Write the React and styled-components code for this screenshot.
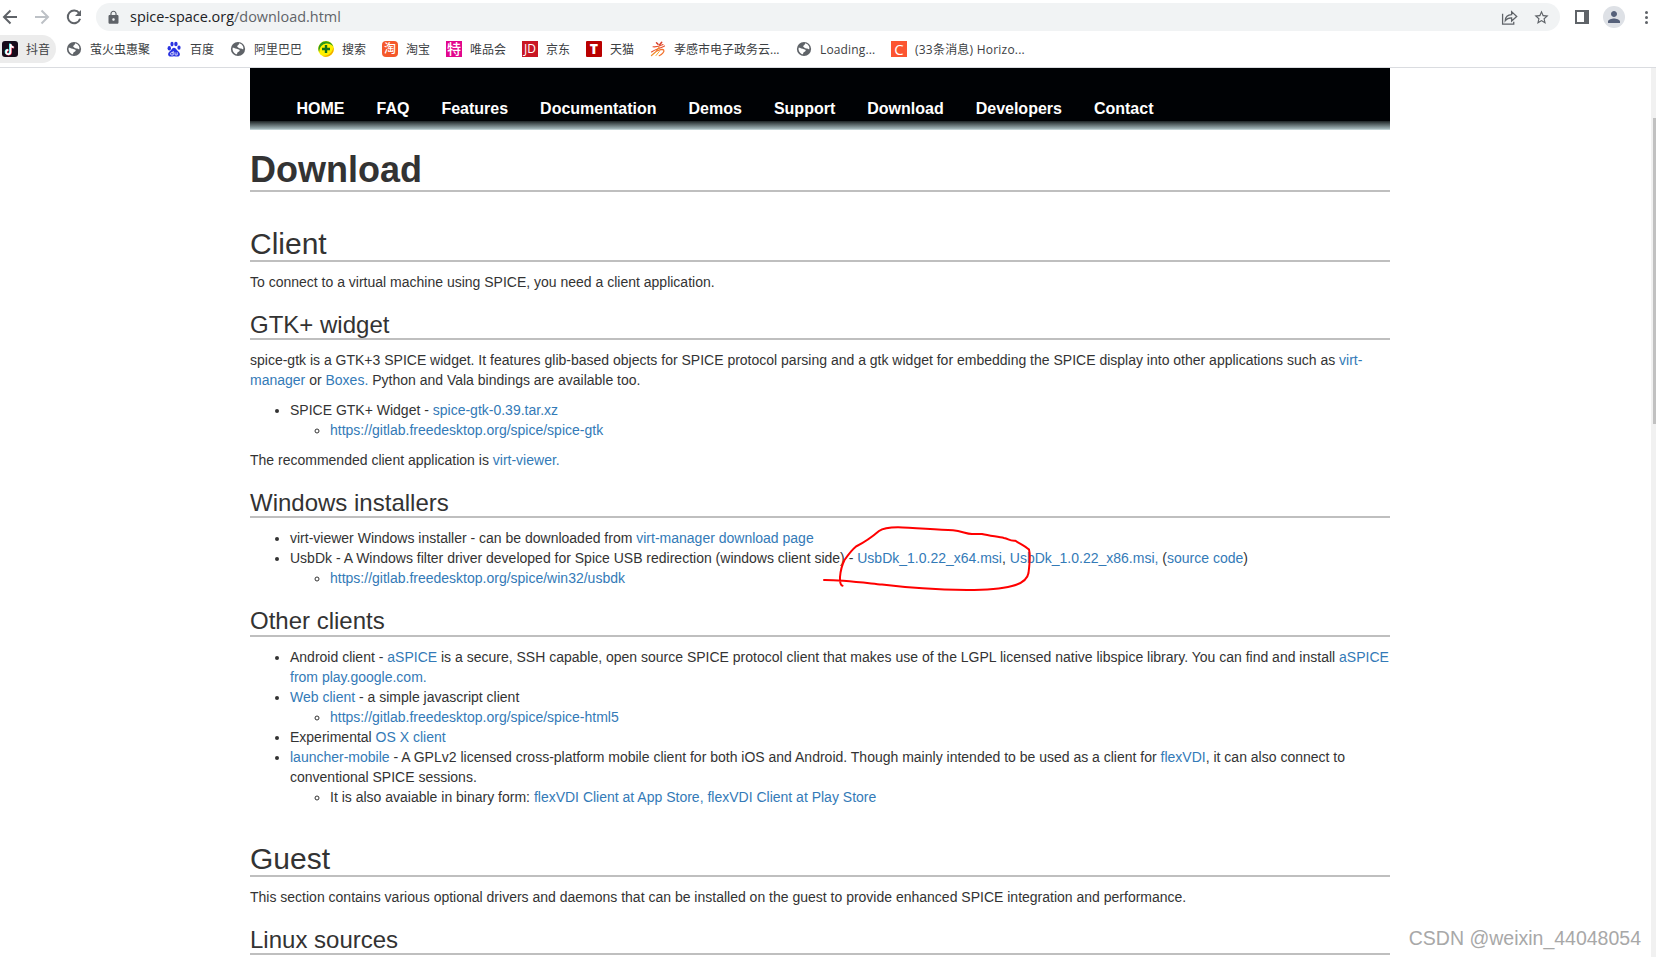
import React from "react";
import styled, { createGlobalStyle } from "styled-components";
import { MdLock, MdPerson, MdStarBorder } from "react-icons/md";

const navItems = [
  "HOME",
  "FAQ",
  "Features",
  "Documentation",
  "Demos",
  "Support",
  "Download",
  "Developers",
  "Contact",
];

const GlobeIcon = () => (
  <svg width="16" height="16" viewBox="0 0 16 16">
    <circle cx="8" cy="8" r="7.1" fill="#5f6368" />
    <path
      d="M2.6 6.8c1.6-.1 2 .7 3.2.8 1.3.1 1.7.9 3 1 1 .2 1.2 1 .5 1.7-.8.8-1.9.7-2.1 1.9-.1.7-.5 1.3-1.2 1C3.500 12 2.1 9.500 2.6 6.800zM9.200 2.300c1.7.4 3 1.5 3.8 3 .4 1 .5 2 .3 3-.8.1-1.2-.9-2.2-.9-1.2 0-2-.3-2.900-1-1-.8-1.400-1.300-.5-2 .9-.7 1.3-1 1.5-2.100z"
      fill="#fff"
    />
  </svg>
);

const DouyinIcon = () => (
  <svg width="16" height="16" viewBox="0 0 16 16">
    <rect width="16" height="16" rx="3" fill="#170b1a" />
    <g fill="none" strokeWidth="1.7">
      <path d="M7.9 2.5v8.2a2.2 2.2 0 1 1-2.2-2.2M7.9 3c.2 1.8 1.3 2.8 3.2 2.9" stroke="#25f4ee" />
      <path d="M9 3.3v8.2a2.2 2.2 0 1 1-2.2-2.2M9 3.8c.2 1.8 1.3 2.8 3.2 2.9" stroke="#fe2c55" />
      <path d="M8.5 2.9v8.2a2.2 2.2 0 1 1-2.2-2.2M8.5 3.4c.2 1.8 1.3 2.8 3.2 2.9" stroke="#fff" />
    </g>
  </svg>
);

const BaiduIcon = () => (
  <svg width="16" height="16" viewBox="0 0 16 16" fill="#2932e1">
    <ellipse cx="3.3" cy="7.3" rx="1.7" ry="2.2" />
    <ellipse cx="6" cy="3.1" rx="1.6" ry="2.3" />
    <ellipse cx="9.9" cy="3" rx="1.7" ry="2.2" />
    <ellipse cx="13" cy="6.7" rx="1.6" ry="2.1" />
    <path d="M8 6.8c1.4 0 2.1 1.4 3 2.400 1.2 1.2 2.9 2 2.9 4 0 1.8-1.3 2.400-2.700 2.300-1.2 0-2-.3-3.200-.3s-2.100.3-3.200.3c-1.6 0-2.700-.7-2.700-2.300 0-1.9 1.8-2.8 2.900-4C5.900 8.200 6.600 6.800 8 6.800z" />
    <path
      d="M7.200 10v4H5.700a1.200 1.200 0 0 1 0-2.400h1.500M9 11.300v1.800c0 .7.3.9.8.9h1.400v-2.700"
      fill="none"
      stroke="#fff"
      strokeWidth=".8"
    />
  </svg>
);

const SearchBallIcon = () => (
  <svg width="16" height="16" viewBox="0 0 16 16">
    <circle cx="8" cy="8" r="7.9" fill="#fff100" />
    <path
      d="M.4 8C.4 3.5 4 0 8.3.2c3.400.1 6 2.400 7 5.200C12.500 2.300 8 1.300 4.600 4 2.700 5.300 1.500 7.200 1.200 11 .7 10.200.4 9 .4 8z"
      fill="#2d9a1c"
    />
    <path
      d="M15.300 6c1 3.200-.2 6.300-2.600 8-2.400 1.900-5.900 2.200-8.400.8 3 .2 5.700-.4 7.700-2.300 1.900-1.700 3-3.800 3.300-6.500z"
      fill="#f2a900"
    />
    <path d="M8 4v8M4 8h8" stroke="#12701c" strokeWidth="2.4" />
  </svg>
);

const RunnerIcon = () => (
  <svg width="16" height="16" viewBox="0 0 16 16" fill="none" strokeLinecap="round">
    <path d="M6.5 1.8L8 3.300M11.700 1.300L9.500 4" stroke="#d9402c" strokeWidth="1.5" />
    <path d="M3 5.8c3 .3 6-.2 10-2.300M14.500 4.900C9.500 7.500 5 8.300 1.500 11" stroke="#e8502c" strokeWidth="1.1" />
    <path d="M9 6.500C7.500 9.500 5 12 1.500 14.500" stroke="#f08b2a" strokeWidth="1.300" />
    <path d="M7 10c2.500-1.300 6-2 6.800-.8.8 1.300-1.500 4-4.600 5.500" stroke="#f2702a" strokeWidth="1.200" />
    <path d="M9.300 10.500L6 14.500" stroke="#f5a32a" strokeWidth="1" />
  </svg>
);

const bookmarks = [
  { label: "抖音", width: 66, icon: <DouyinIcon />, active: true },
  { label: "萤火虫惠聚", width: 100, icon: <GlobeIcon /> },
  { label: "百度", width: 64, icon: <BaiduIcon /> },
  { label: "阿里巴巴", width: 88, icon: <GlobeIcon /> },
  { label: "搜索", width: 64, icon: <SearchBallIcon /> },
  { label: "淘宝", width: 64, glyph: "淘", bg: "#f4582a", size: 12, radius: 4 },
  { label: "唯品会", width: 76, glyph: "特", bg: "#e2068c", size: 14 },
  { label: "京东", width: 64, glyph: "JD", bg: "#c91623", size: 12 },
  { label: "天猫", width: 64, glyph: "T", bg: "#b90000", size: 14, radius: 1, bold: true },
  { label: "孝感市电子政务云...", width: 146, icon: <RunnerIcon /> },
  { label: "Loading...", width: 95, icon: <GlobeIcon />, spacing: 0.15 },
  { label: "(33条消息) Horizo...", width: 150, glyph: "C", bg: "#fc5531", size: 15, spacing: 0.22 },
];

const App = () => {
  return (
    <Screen>
      <GlobalStyle />
      <Toolbar>
        <NavIcon $color="#5f6368" viewBox="0 0 16 16">
          <path d="M15 8H2M8.500 1.500L2 8l6.500 6.500" />
        </NavIcon>
        <NavIcon $color="#bdc1c6" viewBox="0 0 16 16">
          <path d="M1 8h13M7.500 1.500L14 8l-6.500 6.500" />
        </NavIcon>
        <NavIcon $color="#5f6368" viewBox="0 0 16 16">
          <path d="M13.200 4.200A6.300 6.300 0 1 0 14.100 9.800" />
          <path d="M15 1v6H9z" fill="#5f6368" stroke="none" />
        </NavIcon>
        <AddressBar>
          <MdLock className="lock" />
          <Url>
            spice-space.org<span>/download.html</span>
          </Url>
          <ShareIcon viewBox="0 0 16 16">
            <path d="M1.500 4.500v9.800H12V12" />
            <path d="M4 11c.2-3.600 2.400-5.500 6-5.600V2.500L14.800 7 10 11.300V8.400C7.500 8.300 5.500 9 4 11z" />
          </ShareIcon>
          <MdStarBorder className="star" />
        </AddressBar>
        <PanelIcon />
        <Avatar>
          <MdPerson />
        </Avatar>
        <Dots>
          <i />
          <i />
          <i />
        </Dots>
      </Toolbar>

      <BookmarkBar>
        {bookmarks.map((item) => (
          <Bookmark
            key={item.label}
            $width={item.width}
            $active={item.active}
            $spacing={item.spacing}
          >
            {item.icon || (
              <Badge $bg={item.bg} $size={item.size} $radius={item.radius} $bold={item.bold}>
                {item.glyph}
              </Badge>
            )}
            <span>{item.label}</span>
          </Bookmark>
        ))}
      </BookmarkBar>

      <Viewport>
        <Page>
          <Header>
            {navItems.map((item) => (
              <NavLink key={item}>{item}</NavLink>
            ))}
          </Header>

          <Title>Download</Title>

          <Heading>Client</Heading>
          <Text>To connect to a virtual machine using SPICE, you need a client application.</Text>

          <SubHeading>GTK+ widget</SubHeading>
          <Text>
            spice-gtk is a GTK+3 SPICE widget. It features glib-based objects for SPICE protocol
            parsing and a gtk widget for embedding the SPICE display into other applications such
            as <Link>virt-manager</Link> or <Link>Boxes.</Link> Python and Vala bindings are
            available too.
          </Text>
          <List>
            <li>
              SPICE GTK+ Widget - <Link>spice-gtk-0.39.tar.xz</Link>
              <SubList>
                <li>
                  <Link>https://gitlab.freedesktop.org/spice/spice-gtk</Link>
                </li>
              </SubList>
            </li>
          </List>
          <Text>
            The recommended client application is <Link>virt-viewer.</Link>
          </Text>

          <SubHeading>Windows installers</SubHeading>
          <List>
            <li>
              virt-viewer Windows installer - can be downloaded from{" "}
              <Link>virt-manager download page</Link>
            </li>
            <li>
              UsbDk - A Windows filter driver developed for Spice USB redirection (windows client
              side) -{" "}
              <Marked>
                <Link>UsbDk_1.0.22_x64.msi</Link>
                <Scribble viewBox="0 0 210 70">
                  <path d="M20.500 58.700C17.500 58 18 54 18 50C18.500 44 20 38 22.500 33C26 28 31 22 34 19.500C40 16.500 50 10 57 4C61 1 68 .2 76 .2C90 .5 112 2.500 131 3.300C140 4 144 7 150 7H160C168 9 176 9.500 182 11C187 12 187 14 193 13.700C199 17 204 19.500 207 22.500C208.500 28 207.500 38 206.500 46C205.500 52 200 56.500 190 59C176 62.700 160 63 145 63C110 62.500 80 60 60 57.500C40 55.500 18 52.800 2 53" />
                </Scribble>
              </Marked>
              , <Link>UsbDk_1.0.22_x86.msi,</Link> (<Link>source code</Link>)
              <SubList>
                <li>
                  <Link>https://gitlab.freedesktop.org/spice/win32/usbdk</Link>
                </li>
              </SubList>
            </li>
          </List>

          <SubHeading>Other clients</SubHeading>
          <List>
            <li>
              Android client - <Link>aSPICE</Link> is a secure, SSH capable, open source SPICE
              protocol client that makes use of the LGPL licensed native libspice library. You can
              find and install <Link>aSPICE from play.google.com.</Link>
            </li>
            <li>
              <Link>Web client</Link> - a simple javascript client
              <SubList>
                <li>
                  <Link>https://gitlab.freedesktop.org/spice/spice-html5</Link>
                </li>
              </SubList>
            </li>
            <li>
              Experimental <Link>OS X client</Link>
            </li>
            <li>
              <Link>launcher-mobile</Link> - A GPLv2 licensed cross-platform mobile client for both
              iOS and Android. Though mainly intended to be used as a client for{" "}
              <Link>flexVDI</Link>, it can also connect to conventional SPICE sessions.
              <SubList>
                <li>
                  It is also avaiable in binary form: <Link>flexVDI Client at App Store,</Link>{" "}
                  <Link>flexVDI Client at Play Store</Link>
                </li>
              </SubList>
            </li>
          </List>

          <Heading>Guest</Heading>
          <Text>
            This section contains various optional drivers and daemons that can be installed on
            the guest to provide enhanced SPICE integration and performance.
          </Text>

          <SubHeading>Linux sources</SubHeading>
        </Page>
        <ScrollTrack>
          <ScrollThumb />
        </ScrollTrack>
        <Watermark>CSDN @weixin_44048054</Watermark>
      </Viewport>
    </Screen>
  );
};

export default App;

const GlobalStyle = createGlobalStyle`
  * {
    box-sizing: border-box;
  }

  body {
    margin: 0;
    overflow: hidden;
    background: #fff;
  }
`;

const Screen = styled.div`
  display: flex;
  flex-direction: column;
  width: 1656px;
  height: 957px;
  overflow: hidden;
  color: #333;
  font: 14px/20px "Liberation Sans", Arial, sans-serif;
`;

const Toolbar = styled.div`
  display: flex;
  align-items: center;
  flex: none;
  height: 30px;
  margin-top: 3px;
  padding: 0 4px 2px 2px;
`;

const NavIcon = styled.svg`
  flex: none;
  width: 16px;
  height: 16px;
  margin-right: 16px;
  fill: none;
  stroke: ${(props) => props.$color};
  stroke-width: 2;
`;

const AddressBar = styled.div`
  display: flex;
  align-items: center;
  width: 1464px;
  height: 28px;
  margin-left: -2px;
  padding: 0 10px;
  border-radius: 14px;
  background: #f1f3f4;
  color: #5f6368;

  .lock {
    width: 15px;
    height: 15px;
    margin-right: 9px;
  }

  .star {
    width: 17px;
    height: 17px;
  }
`;

const Url = styled.span`
  margin-right: auto;
  padding-bottom: 1px;
  color: #202124;
  font: 14.45px/20px "Open Sans", sans-serif;

  span {
    color: #5f6368;
  }
`;

const ShareIcon = styled.svg`
  width: 17px;
  height: 17px;
  margin-right: 15px;
  fill: none;
  stroke: #5f6368;
  stroke-width: 1.2;
`;

const PanelIcon = styled.div`
  width: 14px;
  height: 14px;
  margin-left: 15px;
  border: 2px solid #5f6368;
  border-right-width: 5px;
`;

const Avatar = styled.div`
  display: flex;
  align-items: center;
  justify-content: center;
  width: 22px;
  height: 22px;
  margin-left: 14px;
  border-radius: 50%;
  background: #dee1e6;
  color: #56617a;
  font-size: 18px;
`;

const Dots = styled.div`
  display: flex;
  flex-direction: column;
  gap: 2px;
  margin-left: 20px;

  i {
    width: 3px;
    height: 3px;
    border-radius: 50%;
    background: #5f6368;
  }
`;

const BookmarkBar = styled.div`
  display: flex;
  align-items: center;
  flex: none;
  height: 35px;
  padding-bottom: 2px;
  border-bottom: 1px solid #dadce0;
`;

const Bookmark = styled.div`
  display: flex;
  align-items: center;
  flex: none;
  width: ${(props) => props.$width - (props.$active ? 10 : 0)}px;
  height: 28px;
  margin-right: ${(props) => (props.$active ? 10 : 0)}px;
  padding-left: ${(props) => (props.$active ? 2 : 0)}px;
  border-radius: 0 14px 14px 0;
  background: ${(props) => (props.$active ? "#ececec" : "none")};
  color: #3c4043;
  font: 12px/18px "Open Sans", "Noto Sans CJK SC", sans-serif;
  letter-spacing: ${(props) => props.$spacing || 0}px;
  white-space: nowrap;

  span {
    margin-left: 8px;
    padding-top: 1px;
  }

  svg {
    flex: none;
  }
`;

const Badge = styled.b`
  display: flex;
  align-items: center;
  justify-content: center;
  flex: none;
  width: 16px;
  height: 16px;
  border-radius: ${(props) => props.$radius || 0}px;
  background: ${(props) => props.$bg};
  color: #fff;
  font-size: ${(props) => props.$size}px;
  font-weight: ${(props) => (props.$bold ? 800 : 500)};
  line-height: 16px;
  letter-spacing: 0;
`;

const Viewport = styled.div`
  position: relative;
  display: flex;
  justify-content: space-between;
  flex: 1;
  min-height: 0;
  overflow: hidden;
`;

const Page = styled.div`
  width: 1140px;
  margin-left: 250px;
`;

const Header = styled.div`
  display: flex;
  gap: 32px;
  height: 62px;
  margin-bottom: 20px;
  padding: 31px 46px 0 46.5px;
  background: linear-gradient(#000205 53px, #1c2224 53px, #a5b9bd 61px, #d9e6e8 62px);
`;

const NavLink = styled.a`
  color: #fff;
  font-size: 16px;
  font-weight: bold;
`;

const Title = styled.h1`
  margin: 0;
  border-bottom: 2px solid #bfbfbf;
  font-size: 36px;
  line-height: 1.1;
`;

const Heading = styled.h2`
  margin: 35px 0 10px;
  border-bottom: 2px solid #bfbfbf;
  font-size: 30px;
  font-weight: 500;
  line-height: 1.1;
`;

const SubHeading = styled.h3`
  margin: 20px 0 10px;
  border-bottom: 2px solid #bfbfbf;
  font-size: 24px;
  font-weight: 500;
  line-height: 1.1;
`;

const Text = styled.p`
  margin: 0 0 10px;
`;

const List = styled.ul`
  margin: 0 0 10px;
  padding-left: 40px;
`;

const SubList = styled.ul`
  margin: 0;
  padding-left: 40px;
`;

const Link = styled.a`
  color: #337ab7;
`;

const Marked = styled.span`
  position: relative;
`;

// hand-drawn ring around the x64 installer
const Scribble = styled.svg`
  position: absolute;
  top: -23px;
  left: -35px;
  width: 210px;
  height: 70px;
  overflow: visible;
  fill: none;
  stroke: #f00;
  stroke-width: 2;
  stroke-linecap: round;
  pointer-events: none;
`;

const ScrollTrack = styled.div`
  width: 5px;
  padding: 50px 0 0 2px;
  background: #f1f1f1;
`;

const ScrollThumb = styled.div`
  height: 306px;
  background: #c1c1c1;
`;

const Watermark = styled.div`
  position: absolute;
  right: 15px;
  bottom: 8px;
  color: #a8a8a8;
  font: 19.5px/22px "Liberation Sans", Arial, sans-serif;
  text-shadow: -1px -1px 0 rgba(255, 255, 255, 0.6);
`;
